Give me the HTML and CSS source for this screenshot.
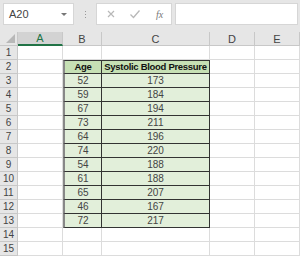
FILE: index.html
```html
<!DOCTYPE html>
<html>
<head>
<meta charset="utf-8">
<link rel="stylesheet" href="styles.css">
</head>
<body>
<div class="toolbar">
  <div class="namebox"><span>A20</span><span class="caret"></span></div>
  <div class="dots"><i></i><i></i><i></i></div>
  <div class="fxbox">
    <svg width="10" height="10" viewBox="0 0 10 10"><path d="M2 2 L8 8 M8 2 L2 8" stroke="#b8b8b8" stroke-width="1.2" fill="none"/></svg>
    <svg width="12" height="10" viewBox="0 0 12 10"><path d="M1.5 5.5 L4.5 8.5 L10.5 1.5" stroke="#b8b8b8" stroke-width="1.3" fill="none"/></svg>
    <span class="fx">fx</span>
  </div>
  <div class="formula"></div>
</div>
<div class="sheet">
  <div class="corner"></div>
  <div class="ch sel">A</div><div class="ch">B</div><div class="ch">C</div><div class="ch">D</div><div class="ch">E</div>
</div>
<div class="sheet" id="rows"></div>
<script src="app.js"></script>
</body>
</html>
```
FILE: app.js
```js
var data=[[52,173],[59,184],[67,194],[73,211],[64,196],[74,220],[54,188],[61,188],[65,207],[46,167],[72,217]];
var g=document.getElementById('rows');
var h='';
for(var r=1;r<=15;r++){
  h+='<div class="rh">'+r+'</div><div class="c"></div>';
  if(r===2){h+='<div class="c t th first">Age</div><div class="c t th">Systolic Blood Pressure</div>';}
  else if(r>=3&&r<=13){var d=data[r-3];h+='<div class="c t first">'+d[0]+'</div><div class="c t">'+d[1]+'</div>';}
  else{h+='<div class="c"></div><div class="c"></div>';}
  h+='<div class="c"></div><div class="c"></div>';
}
g.innerHTML=h;
```
FILE: styles.css
```css
* { box-sizing: border-box; }
body { margin: 0; background: #fff; font-family: "Liberation Sans", sans-serif; overflow: hidden; }
.toolbar { height: 32px; background: #e6e6e6; display: flex; align-items: flex-start; padding: 3px 0 0 3px; }
.namebox { width: 71px; height: 22px; background: #fff; border: 1px solid #d6d6d6; display: flex; align-items: center; justify-content: space-between; padding: 0 6px 0 5px; font-size: 11px; color: #444; }
.caret { width: 0; height: 0; border-left: 3px solid transparent; border-right: 3px solid transparent; border-top: 3px solid #777; }
.dots { width: 22px; height: 22px; display: flex; flex-direction: column; align-items: center; justify-content: center; gap: 2px; }
.dots i { display: block; width: 1px; height: 1px; background: #999; }
.fxbox { width: 76px; height: 22px; background: #fff; border: 1px solid #d6d6d6; display: flex; align-items: center; padding: 0 3px 0 9px; gap: 13px; }
.fx { font-family: "Liberation Serif", serif; font-style: italic; font-size: 10px; color: #777; margin-left: 2px; }
.formula { flex: 1; height: 22px; margin-left: 3px; margin-right: 2px; background: #fff; border: 1px solid #d6d6d6; }
.sheet { display: grid; grid-template-columns: 18px 45px 39px 108px 45px 45px; grid-auto-rows: 14px; }
.corner { background: #e6e6e6; border-right: 1px solid #c8c8c8; border-bottom: 1px solid #c8c8c8; position: relative; }
.corner::after { content: ""; position: absolute; right: 2px; bottom: 2px; border-left: 9px solid transparent; border-bottom: 9px solid #b8b8b8; }
.ch { background: #e6e6e6; border-right: 1px solid #c8c8c8; border-bottom: 1px solid #c8c8c8; font-size: 11px; color: #444; text-align: center; line-height: 14px; }
.ch.sel { background: #d3d3d3; color: #217346; border-bottom: 2px solid #217346; line-height: 13px; }
.rh { background: #e6e6e6; border-right: 1px solid #c8c8c8; border-bottom: 1px solid #c8c8c8; font-size: 10px; color: #444; text-align: center; line-height: 14px; }
.c { border-right: 1px solid #dcdcdc; border-bottom: 1px solid #dcdcdc; font-size: 10px; color: #444; text-align: center; line-height: 13px; }
.c.t { background: #e2efda; border-right: 1px solid #333; border-bottom: 1px solid #333; }
.c.t.first { border-left: 2px solid #888; }
.c.th { background: #c6e0b4; font-weight: bold; color: #111; border-top: 1px solid #333; line-height: 12px; font-size: 9.5px; letter-spacing: -0.3px; }
```
